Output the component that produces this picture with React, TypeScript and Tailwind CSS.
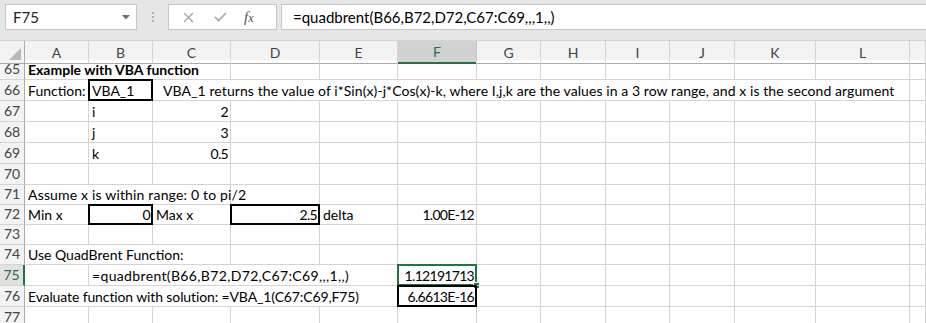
import React from "react";

const GRID =
  "grid grid-cols-[25px_64px_64px_78px_89px_78px_79px_64px_65px_64px_65px_81px_94px_1fr]";

type CellProps = {
  span?: string;
  text?: string;
  right?: boolean;
  bold?: boolean;
  box?: "black" | "green";
  extra?: string;
  track?: string;
};

function Cell({ span = "", text, right, bold, box, extra = "", track = "" }: CellProps) {
  return (
    <div
      className={`relative flex items-end min-w-0 ${span} border-r border-b border-[#d4d4d4] ${
        right ? "justify-end pr-[2px]" : "pl-[3px]"
      } ${extra}`}
    >
      {text && (
        <span
          className={`whitespace-nowrap leading-[18px] text-[14px] text-black ${track} ${
            bold ? "font-bold" : ""
          }`}
        >
          {text}
        </span>
      )}
      {box === "black" && (
        <div className="absolute -left-px -top-px -right-px -bottom-px border-2 border-black" />
      )}
      {box === "green" && (
        <>
          <div className="absolute -left-px -top-px -right-px -bottom-px border-2 border-[#217346]" />
          <div className="absolute -right-[4px] -bottom-[4px] w-[7px] h-[7px] bg-[#217346] border border-white" />
        </>
      )}
    </div>
  );
}

function RowHead({ n, sel }: { n: number; sel?: boolean }) {
  return (
    <div
      className={`flex items-end justify-center pb-[1px] border-b border-[#d4d4d4] text-[14px] leading-[18px] ${
        sel
          ? "bg-[#e1e1e1] text-[#217346] border-r-2 border-r-[#217346]"
          : "bg-[#f3f3f3] text-[#444444] border-r border-r-[#ababab]"
      }`}
    >
      {n}
    </div>
  );
}

function Empty({ n }: { n: number }) {
  return (
    <>
      {Array.from({ length: n }).map((_, i) => (
        <Cell key={i} />
      ))}
    </>
  );
}

const NUM = "tracking-[-0.7px]";

export default function App() {
  const letters = ["A", "B", "C", "D", "E", "F", "G", "H", "I", "J", "K", "L", ""];
  return (
    <div className="w-[926px] h-[323px] overflow-hidden bg-white font-['Lato','Carlito',sans-serif]">
      {/* Formula bar */}
      <div className="h-[40px] bg-[#e6e6e6] flex items-start pt-[4px] pl-[5px]">
        <div className="relative w-[132px] h-[26px] bg-white border border-[#c6c6c6] flex items-center pl-[7px] text-[15px] text-[#222]">
          F75
          <svg className="absolute right-[6px] top-[10px]" width="8" height="5" viewBox="0 0 8 5">
            <path d="M0 0 L8 0 L4 4.5 Z" fill="#707070" />
          </svg>
        </div>
        <div className="w-[31px] h-[26px] flex flex-col items-center justify-center gap-[2px]">
          <div className="w-[2px] h-[2px] bg-[#b0b0b0]" />
          <div className="w-[2px] h-[2px] bg-[#b0b0b0]" />
          <div className="w-[2px] h-[2px] bg-[#b0b0b0]" />
        </div>
        <div className="w-[109px] h-[26px] bg-white border border-[#c6c6c6] flex items-center">
          <svg className="ml-[14px]" width="11" height="11" viewBox="0 0 11 11">
            <path d="M1 1 L10 10 M10 1 L1 10" stroke="#a6a6a6" strokeWidth="1.4" />
          </svg>
          <svg className="ml-[20px]" width="13" height="10" viewBox="0 0 13 10">
            <path d="M1 5 L4.5 8.5 L12 1" stroke="#a6a6a6" strokeWidth="1.6" fill="none" />
          </svg>
          <span className="ml-[17px] text-[15px] italic text-[#555] font-['Liberation_Serif',serif] leading-none">
            f<span className="text-[12px]">x</span>
          </span>
        </div>
        <div className="ml-[4px] flex-1 h-[26px] bg-white border border-[#c6c6c6] border-r-0 flex items-center pl-[11px] text-[15px] text-black">
          =quadbrent(B66,B72,D72,C67:C69,,,1,,)
        </div>
      </div>

      {/* Column headers */}
      <div className={`${GRID} h-[20px] bg-[#f3f3f3] border-t border-[#d4d4d4]`}>
        <div className="relative border-r border-b border-[#ababab]">
          <svg className="absolute right-[3px] bottom-[3px]" width="12" height="12" viewBox="0 0 12 12">
            <path d="M12 0 L12 12 L0 12 Z" fill="#b8b8b8" />
          </svg>
        </div>
        {letters.map((l, i) =>
          l === "F" ? (
            <div
              key={i}
              className="flex items-center justify-center bg-[#d2d2d2] border-r border-[#c6c6c6] border-b-2 border-b-[#217346] text-[14px] text-[#217346]"
            >
              {l}
            </div>
          ) : (
            <div
              key={i}
              className="flex items-center justify-center border-r border-[#d4d4d4] border-b border-b-[#ababab] text-[14px] text-[#444444]"
            >
              {l}
            </div>
          )
        )}
      </div>

      {/* Row 65 */}
      <div className={`${GRID} h-[20px]`}>
        <RowHead n={65} />
        <Cell span="col-span-3" text="Example with VBA function" bold />
        <Empty n={10} />
      </div>
      {/* Row 66 */}
      <div className={`${GRID} h-[21px]`}>
        <RowHead n={66} />
        <Cell text="Function:" />
        <Cell text="VBA_1" box="black" />
        <Cell
          span="col-span-10"
          extra="pl-[10px]"
          track="tracking-[0.08px]"
          text="VBA_1 returns the value of i*Sin(x)-j*Cos(x)-k, where I,j,k are the values in a 3 row range, and x is the second argument"
        />
        <Empty n={1} />
      </div>
      {/* Row 67 */}
      <div className={`${GRID} h-[21px]`}>
        <RowHead n={67} />
        <Cell />
        <Cell text="i" />
        <Cell text="2" right track={NUM} />
        <Empty n={10} />
      </div>
      {/* Row 68 */}
      <div className={`${GRID} h-[21px]`}>
        <RowHead n={68} />
        <Cell />
        <Cell text="j" />
        <Cell text="3" right track={NUM} />
        <Empty n={10} />
      </div>
      {/* Row 69 */}
      <div className={`${GRID} h-[21px]`}>
        <RowHead n={69} />
        <Cell />
        <Cell text="k" />
        <Cell text="0.5" right track={NUM} />
        <Empty n={10} />
      </div>
      {/* Row 70 */}
      <div className={`${GRID} h-[21px]`}>
        <RowHead n={70} />
        <Empty n={13} />
      </div>
      {/* Row 71 */}
      <div className={`${GRID} h-[20px]`}>
        <RowHead n={71} />
        <Cell span="col-span-3" text="Assume x is within range: 0 to pi/2" track="tracking-[0.17px]" />
        <Empty n={10} />
      </div>
      {/* Row 72 */}
      <div className={`${GRID} h-[20px]`}>
        <RowHead n={72} />
        <Cell text="Min x" />
        <Cell text="0" right box="black" track={NUM} />
        <Cell text="Max x" />
        <Cell text="2.5" right box="black" track={NUM} />
        <Cell text="delta" />
        <Cell text="1.00E-12" right track={NUM} />
        <Empty n={7} />
      </div>
      {/* Row 73 */}
      <div className={`${GRID} h-[20px]`}>
        <RowHead n={73} />
        <Empty n={13} />
      </div>
      {/* Row 74 */}
      <div className={`${GRID} h-[20px]`}>
        <RowHead n={74} />
        <Cell span="col-span-3" text="Use QuadBrent Function:" />
        <Empty n={10} />
      </div>
      {/* Row 75 */}
      <div className={`${GRID} h-[21px]`}>
        <RowHead n={75} sel />
        <Cell />
        <Cell
          span="col-span-4"
          text="=quadbrent(B66,B72,D72,C67:C69,,,1,,)"
          track="tracking-[0.35px]"
        />
        <Cell text="1.12191713" right box="green" track={NUM} />
        <Empty n={7} />
      </div>
      {/* Row 76 */}
      <div className={`${GRID} h-[21px]`}>
        <RowHead n={76} />
        <Cell
          span="col-span-5"
          text="Evaluate function with solution: =VBA_1(C67:C69,F75)"
          track="tracking-[-0.12px]"
        />
        <Cell text="6.6613E-16" right box="black" track={NUM} />
        <Empty n={7} />
      </div>
      {/* Row 77 */}
      <div className={`${GRID} h-[21px]`}>
        <RowHead n={77} />
        <Empty n={13} />
      </div>
    </div>
  );
}
